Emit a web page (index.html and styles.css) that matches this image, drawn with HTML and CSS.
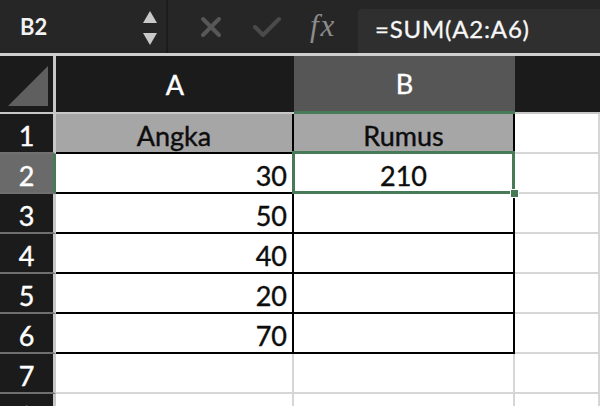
FILE: index.html
```html
<!DOCTYPE html>
<html>
<head>
<meta charset="utf-8">
<link rel="stylesheet" href="styles.css">
</head>
<body>
<div class="toolbar">
  <div class="namebox">
    <span class="name">B2</span>
    <div class="spinner">
      <svg width="16" height="36" viewBox="0 0 16 36"><polygon points="8,1 15,13 1,13" fill="#c9c9c9"/><polygon points="1,23 15,23 8,35" fill="#c9c9c9"/></svg>
    </div>
  </div>
  <div class="actions">
    <svg class="ico" width="22" height="22" viewBox="0 0 22 22"><path d="M3 3 L19 19 M19 3 L3 19" stroke="#575757" stroke-width="4" stroke-linecap="round"/></svg>
    <svg class="ico check" width="30" height="22" viewBox="0 0 30 22"><path d="M3 11 L11 19 L27 3" stroke="#4a4a4a" stroke-width="4" fill="none" stroke-linecap="round" stroke-linejoin="round"/></svg>
    <span class="fx">fx</span>
  </div>
  <div class="formula">=SUM(A2:A6)</div>
</div>
<div class="grid">
  <div class="corner"><svg width="44" height="44" viewBox="0 0 44 44"><polygon points="2,42 42,42 42,2" fill="#5f5f5f"/></svg></div>
  <div class="colhead">A</div>
  <div class="colhead sel">B</div>
  <div class="colhead last"></div>

  <div class="rowhead">1</div>
  <div class="cell t title">Angka</div>
  <div class="cell t title bt">Rumus</div>
  <div class="cell"></div>

  <div class="rowhead sel">2</div>
  <div class="cell t num">30</div>
  <div class="cell t active">210<span class="handle"></span></div>
  <div class="cell"></div>

  <div class="rowhead">3</div>
  <div class="cell t num">50</div>
  <div class="cell t"></div>
  <div class="cell"></div>

  <div class="rowhead">4</div>
  <div class="cell t num">40</div>
  <div class="cell t"></div>
  <div class="cell"></div>

  <div class="rowhead">5</div>
  <div class="cell t num">20</div>
  <div class="cell t"></div>
  <div class="cell"></div>

  <div class="rowhead">6</div>
  <div class="cell t num">70</div>
  <div class="cell t"></div>
  <div class="cell"></div>

  <div class="rowhead">7</div>
  <div class="cell"></div>
  <div class="cell"></div>
  <div class="cell"></div>

  <div class="rowhead">8</div>
  <div class="cell"></div>
  <div class="cell"></div>
  <div class="cell"></div>
</div>
</body>
</html>
```
FILE: styles.css
```css
* { box-sizing: border-box; }
html, body { margin: 0; padding: 0; }
body {
  width: 600px;
  height: 406px;
  overflow: hidden;
  background: #ffffff;
  font-family: Lato, "Open Sans", sans-serif;
}
.toolbar {
  height: 56px;
  background: #262626;
  display: flex;
  align-items: stretch;
  border-bottom: 3px solid #cfcfcf;
}
.namebox {
  width: 168px;
  display: flex;
  align-items: center;
  justify-content: space-between;
  padding: 0 8px 0 20px;
  border-right: 2px solid #1c1c1c;
}
.name {
  color: #f2f2f2;
  font-size: 22px;
  font-weight: 700;
}
.spinner { display: flex; align-items: center; padding-top: 2px; }
.actions {
  width: 190px;
  display: flex;
  align-items: center;
  padding-left: 32px;
}
.check { margin-left: 30px; }
.fx {
  margin-left: 28px;
  font-family: "Liberation Serif", serif;
  font-style: italic;
  font-size: 31px;
  color: #8c8c8c;
  letter-spacing: 2px;
  padding-bottom: 2px;
}
.formula {
  flex: 1;
  margin-top: 9px;
  background: #2f2f2f;
  border-top-left-radius: 4px;
  color: #f7f7f7;
  font-size: 24px;
  padding: 5px 0 0 17px;
  letter-spacing: 0.8px;
  -webkit-text-stroke: 0.3px #f7f7f7;
}
.grid {
  display: grid;
  grid-template-columns: 56px 238px 221px 1fr;
  grid-template-rows: 58px repeat(8, 40px);
  font-size: 27px;
  line-height: 1.2;
}
.corner {
  background: #1b1b1b;
  border-right: 3px solid #c8c8c8;
  border-bottom: 2px solid #c8c8c8;
  display: flex;
  align-items: flex-end;
  padding: 0 0 4px 6px;
}
.colhead {
  background: #1b1b1b;
  color: #ffffff;
  border-bottom: 2px solid #c8c8c8;
  display: flex;
  align-items: center;
  justify-content: center;
  padding-top: 2px;
  -webkit-text-stroke: 0.4px #ffffff;
}
.colhead.sel {
  background: #565656;
  border-bottom: 3px solid #477a57;
}
.rowhead {
  background: #1b1b1b;
  color: #ffffff;
  border-right: 3px solid #c8c8c8;
  border-bottom: 2px solid #707070;
  display: flex;
  align-items: flex-end;
  justify-content: center;
  -webkit-text-stroke: 0.4px #ffffff;
}
.rowhead.sel {
  background: #6a6a6a;
  border-right-color: #477a57;
}
.cell {
  background: #ffffff;
  border-right: 2px solid #d6d6d6;
  border-bottom: 2px solid #d6d6d6;
  color: #0d0d0d;
  display: flex;
  align-items: flex-end;
  position: relative;
  -webkit-text-stroke: 0.4px #0d0d0d;
}
.cell.t {
  border-right-color: #000000;
  border-bottom-color: #000000;
}
.cell.title {
  background: #a6a6a6;
  justify-content: center;
}
.cell.num {
  justify-content: flex-end;
  padding-right: 5px;
}
.cell.active {
  justify-content: center;
}
.cell.active::after {
  content: "";
  position: absolute;
  left: -2px;
  top: -3px;
  right: -2px;
  bottom: -2px;
  border: 3px solid #477a57;
}
.handle {
  position: absolute;
  right: -6px;
  bottom: -6px;
  width: 9px;
  height: 9px;
  background: #477a57;
  border: 1px solid #ffffff;
  z-index: 2;
}
```
